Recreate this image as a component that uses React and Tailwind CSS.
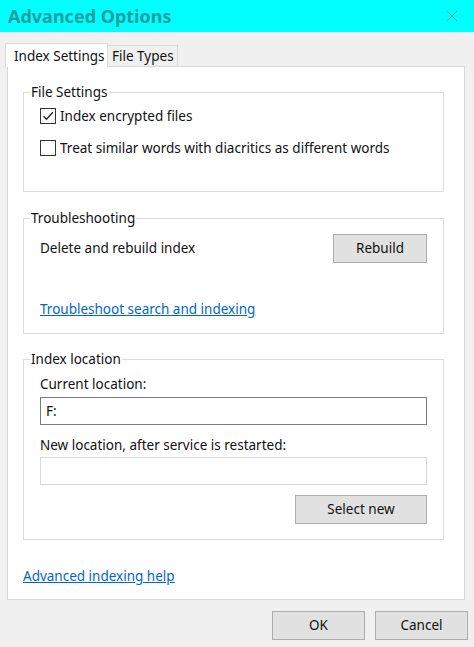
import React, { useState } from "react";

const font = { fontFamily: '"Noto Sans", "Open Sans", sans-serif' };

const CheckBox = ({ checked, onChange, label }) => (
  <label className="flex items-center h-5 cursor-default" onClick={onChange}>
    <span className="w-4 h-4 border border-[#333] bg-white flex items-center justify-center shrink-0">
      {checked && (
        <svg width="12" height="12" viewBox="0 0 12 12">
          <path d="M1.5 6.2 L4.5 9.2 L10.8 2.2" fill="none" stroke="#222" strokeWidth="1.3" />
        </svg>
      )}
    </span>
    <span className="ml-1">{label}</span>
  </label>
);

const WinButton = ({ children, className = "" }) => (
  <button className={"bg-[#e1e1e1] border border-[#adadad] text-[#111] hover:bg-[#e5f1fb] hover:border-[#0078d7] " + className}>
    {children}
  </button>
);

const Group = ({ title, className = "", children }) => (
  <fieldset className={"border border-[#dcdcdc] " + className}>
    <legend className="ml-[6px] px-px leading-5">{title}</legend>
    <div className="px-4">{children}</div>
  </fieldset>
);

export default function App() {
  const [encrypted, setEncrypted] = useState(true);
  const [diacritics, setDiacritics] = useState(false);
  const [tab, setTab] = useState(0);

  return (
    <div className="w-[474px] h-[647px] bg-[#f0f0f0] flex flex-col text-[13.5px] text-[#111] overflow-hidden" style={font}>
      {/* Title bar */}
      <div className="h-8 bg-[#00ffff] flex items-center justify-between pl-2 pr-4 shrink-0">
        <span className="font-bold text-[18px] text-[#1e9e9e]">Advanced Options</span>
        <svg width="12" height="12" viewBox="0 0 12 12">
          <path d="M1 1 L11 11 M11 1 L1 11" stroke="#35a5a5" strokeWidth="1" />
        </svg>
      </div>

      {/* Tabs */}
      <div className="flex items-end h-[34px] pl-[5px] shrink-0 whitespace-nowrap">
        <button
          onClick={() => setTab(0)}
          className="h-6 w-[103px] bg-white border border-b-0 border-[#d9d9d9] pl-2 text-left leading-5 relative z-10 -mb-px"
        >
          Index Settings
        </button>
        <button
          onClick={() => setTab(1)}
          className="h-[21px] w-[70px] bg-[#f0f0f0] border border-b-0 border-l-0 border-[#d9d9d9] pl-1 text-left leading-5"
        >
          File Types
        </button>
      </div>

      {/* Panel */}
      <div className="ml-[7px] w-[458px] h-[534px] bg-white border border-[#d9d9d9] pt-[15px] pl-[15px] shrink-0">
        <Group title="File Settings" className="w-[421px] h-[110px]">
          <div className="pt-1 flex flex-col gap-3">
            <CheckBox checked={encrypted} onChange={() => setEncrypted(!encrypted)} label="Index encrypted files" />
            <CheckBox
              checked={diacritics}
              onChange={() => setDiacritics(!diacritics)}
              label="Treat similar words with diacritics as different words"
            />
          </div>
        </Group>

        <Group title="Troubleshooting" className="w-[421px] h-[126px] mt-4">
          <div className="mt-[6px] flex items-center justify-between">
            <span>Delete and rebuild index</span>
            <WinButton className="w-[94px] h-[29px]">Rebuild</WinButton>
          </div>
          <a href="#" className="block mt-9 leading-5 text-[#0066cc] underline w-fit">
            Troubleshoot search and indexing
          </a>
        </Group>

        <Group title="Index location" className="w-[421px] h-[191px] mt-[15px]">
          <div className="mt-[5px] leading-5">Current location:</div>
          <div className="mt-[3px] h-7 border border-[#7a7a7a] flex items-center px-[5px]">F:</div>
          <div className="mt-[10px] leading-5">New location, after service is restarted:</div>
          <div className="mt-[2px] h-7 border border-[#d9d9d9]"></div>
          <div className="mt-[10px] flex justify-end">
            <WinButton className="w-[132px] h-[29px]">Select new</WinButton>
          </div>
        </Group>

        <a href="#" className="block mt-[26px] leading-5 text-[#0066cc] underline w-fit">
          Advanced indexing help
        </a>
      </div>

      {/* Bottom buttons */}
      <div className="flex justify-end gap-[10px] pt-[11px] pr-[6px]">
        <WinButton className="w-[93px] h-[29px]">OK</WinButton>
        <WinButton className="w-[93px] h-[29px]">Cancel</WinButton>
      </div>
    </div>
  );
}
